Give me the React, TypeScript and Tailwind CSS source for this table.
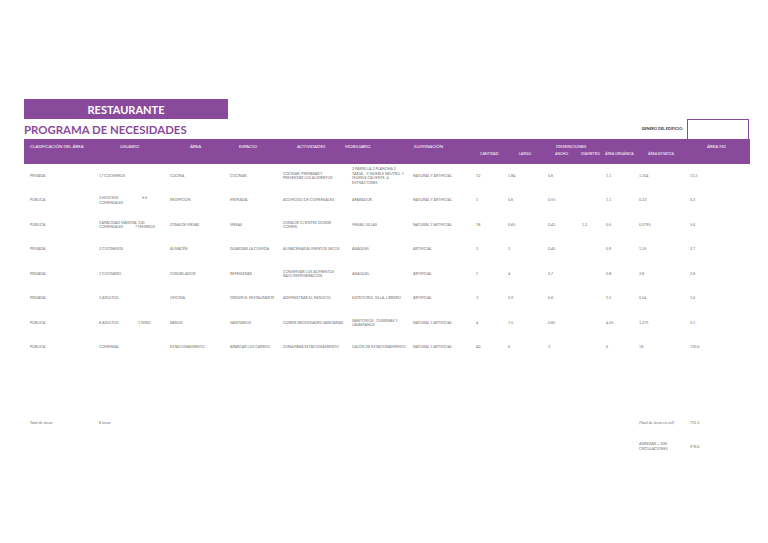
import React from "react";

const COLS =
  "grid grid-cols-[69px_71px_60px_53px_69px_61px_63px_32px_40px_34px_24px_33px_51px_60px]";

type Row = {
  clas: string;
  user: React.ReactNode;
  area: string;
  esp: string;
  act: React.ReactNode;
  mob: React.ReactNode;
  ilu: string;
  cant: string;
  largo: string;
  ancho: string;
  diam: string;
  org: string;
  est: string;
  m2: string;
};

const rows: Row[] = [
  {
    clas: "PRIVADA",
    user: "17 COCINEROS",
    area: "COCINA",
    esp: "COCINAR.",
    act: (
      <>
        COCINAR, PREPARAR Y<br />
        PRESENTAR LOS ALIMENTOS
      </>
    ),
    mob: (
      <>
        2 PARRILLA,2 PLANCHA 2<br />
        TARJA, , 3 MUEBLE NEUTRO, 1<br />
        MUEBLE CALIENTE, 4<br />
        EXTRACTORES,
      </>
    ),
    ilu: "NATURAL Y ARTIFICIAL",
    cant: "12",
    largo: "1.84",
    ancho: "0.6",
    diam: "",
    org: "1.1",
    est: "1.104",
    m2: "13.2",
  },
  {
    clas: "PÚBLICA",
    user: (
      <div className="flex items-start">
        <div className="w-[43px]">
          2 HOSTESS
          <br />
          COMENSALES
        </div>
        <div>6 6</div>
      </div>
    ),
    area: "RECEPCIÓN",
    esp: "ENTRADA.",
    act: "ACOMODO DE COMENSALES",
    mob: "APARADOR",
    ilu: "NATURAL Y ARTIFICIAL",
    cant: "1",
    largo: "0.6",
    ancho: "0.55",
    diam: "",
    org: "1.1",
    est: "0.33",
    m2: "0.3",
  },
  {
    clas: "PÚBLICA",
    user: (
      <div>
        <div>CAPACIDAD MÁXIMA: 100</div>
        <div className="flex">
          <span className="w-[36px]">COMENSALES</span>
          <span>7 MESEROS</span>
        </div>
      </div>
    ),
    area: "ZONA DE MESAS",
    esp: "MESAS",
    act: (
      <>
        ZONA DE CLIENTES DONDE
        <br />
        COMEN
      </>
    ),
    mob: "MESAS, SILLAS",
    ilu: "NATURAL Y ARTIFICIAL",
    cant: "18",
    largo: "0.65",
    ancho: "0.43",
    diam: "1.2",
    org: "0.5",
    est: "0.2795",
    m2: "5.0",
  },
  {
    clas: "PRIVADA",
    user: "2 COCINEROS",
    area: "ALMACÉN",
    esp: "GUARDAR LA COMIDA",
    act: "ALMACENAR ALIMENTOS SECOS",
    mob: "ANAQUEL",
    ilu: "ARTIFICIAL",
    cant: "3",
    largo: "3",
    ancho: "0.45",
    diam: "",
    org: "0.9",
    est: "1.35",
    m2: "2.7",
  },
  {
    clas: "PRIVADA",
    user: "1 COCINERO",
    area: "CONGELADOR",
    esp: "REFRIGERAR.",
    act: (
      <>
        CONSERVAR LOS ALIMENTOS
        <br />
        BAJO REFRIGERACIÓN
      </>
    ),
    mob: "ANAQUEL",
    ilu: "ARTIFICIAL",
    cant: "1",
    largo: "4",
    ancho: "0.7",
    diam: "",
    org: "0.8",
    est: "2.8",
    m2: "2.8",
  },
  {
    clas: "PRIVADA",
    user: "3 ADULTOS",
    area: "OFICINA",
    esp: "DIRIGIR EL RESTAURANTE",
    act: "ADMINISTRAR EL NEGOCIO",
    mob: "ESCRITORIO, SILLA, LIBRERO",
    ilu: "ARTIFICIAL",
    cant: "3",
    largo: "0.9",
    ancho: "0.6",
    diam: "",
    org: "1.5",
    est: "0.54",
    m2: "1.6",
  },
  {
    clas: "PÚBLICA",
    user: (
      <div className="flex">
        <span className="w-[39px]">8 ADULTOS</span>
        <span>1 NIÑO</span>
      </div>
    ),
    area: "BAÑOS",
    esp: "SANITARIOS",
    act: "CUBRIR NECESIDADES SANITARIAS",
    mob: (
      <>
        SANITORIOS , CUBRINAS Y
        <br />
        LAVAMANOS
      </>
    ),
    ilu: "NATURAL Y ARTIFICIAL",
    cant: "4",
    largo: "1.5",
    ancho: "0.85",
    diam: "",
    org: "4.25",
    est: "1.275",
    m2: "5.1",
  },
  {
    clas: "PÚBLICA",
    user: "COMENSAL",
    area: "ESTACIONAMIENTO",
    esp: "APARCAR LOS CARROS",
    act: "ZONA PARA ESTACIONAMIENTO",
    mob: "CAJÓN DE ESTACIONAMIENTO",
    ilu: "NATURAL Y ARTIFICIAL",
    cant: "40",
    largo: "6",
    ancho: "3",
    diam: "",
    org: "6",
    est: "18",
    m2: "720.0",
  },
];

export default function App() {
  return (
    <div className="w-[768px] h-[543px] bg-white overflow-hidden font-['Lato','Open_Sans',sans-serif]">
      <div className="pt-[99px] pl-[24px] w-[750px]">
        {/* Title */}
        <div className="w-[204px] h-[20px] bg-[#8a4a9c] flex items-center justify-center text-white font-bold text-[11px] leading-none">
          RESTAURANTE
        </div>
        {/* Subtitle + genero */}
        <div className="flex items-center h-[20px]">
          <div className="text-[11.4px] font-bold text-[#8a4a9c] leading-none pt-[1px]">
            PROGRAMA DE NECESIDADES
          </div>
          <div className="ml-auto flex items-center h-[20px]">
            <span className="text-[3.8px] font-bold text-[#333] leading-none">
              GENERO DEL EDIFICIO:
            </span>
            <div className="w-[62px] h-[21px] mt-[1px] ml-[4px] mr-[1px] border border-b-0 border-[#8a4a9c]" />
          </div>
        </div>
        {/* Header band */}
        <div className="h-[25px] bg-[#8a4a9c] pl-[6px] pt-[5px] text-white text-[4.4px] font-normal">
          <div className={`${COLS} h-[5px] leading-[5px] whitespace-nowrap`}>
            <div>CLASIFICACIÓN DEL ÁREA</div>
            <div className="pl-[21px]">USUARIO</div>
            <div className="pl-[20px]">ÁREA</div>
            <div className="pl-[9px]">ESPACIO</div>
            <div className="pl-[14px]">ACTIVIDADES</div>
            <div className="-ml-[7px]">MOBILIARIO</div>
            <div className="pl-[1px]">ILUMINACIÓN</div>
            <div className="col-span-6 pl-[80px]">DIMENCIONES</div>
            <div className="pl-[17px]">ÁREA M2</div>
          </div>
          <div
            className={`${COLS} h-[5px] mt-[2px] leading-[5px] whitespace-nowrap text-[3.6px] font-normal`}
          >
            <div className="col-start-8 pl-[4px]">CANTIDAD</div>
            <div className="pl-[11px]">LARGO</div>
            <div className="pl-[7px]">ANCHO</div>
            <div className="-ml-[1px]">DIAMETRO</div>
            <div className="-ml-[1px]">ÁREA ORGÁNICA</div>
            <div className="pl-[9px]">ÁREA ESTATICA</div>
          </div>
        </div>
        {/* Rows */}
        <div className="pl-[6px] text-[3.7px] leading-[4.7px] text-[#6f6f6f] whitespace-nowrap">
          {rows.map((r, i) => (
            <div key={i} className={`${COLS} h-[24.5px] items-center`}>
              <div>{r.clas}</div>
              <div>{r.user}</div>
              <div>{r.area}</div>
              <div>{r.esp}</div>
              <div>{r.act}</div>
              <div>{r.mob}</div>
              <div>{r.ilu}</div>
              <div>{r.cant}</div>
              <div>{r.largo}</div>
              <div>{r.ancho}</div>
              <div>{r.diam}</div>
              <div>{r.org}</div>
              <div>{r.est}</div>
              <div>{r.m2}</div>
            </div>
          ))}
          {/* Footer */}
          <div className={`${COLS} h-[24px] items-center mt-[51px]`}>
            <div>Total de áreas:</div>
            <div>8 áreas</div>
            <div className="col-start-13">(Total de áreas en m2)</div>
            <div>751.3</div>
          </div>
          <div className={`${COLS} h-[24px] items-center`}>
            <div className="col-start-13">
              AGREGAR + 30%
              <br />
              CIRCULACIONES
            </div>
            <div>976.0</div>
          </div>
        </div>
      </div>
    </div>
  );
}
